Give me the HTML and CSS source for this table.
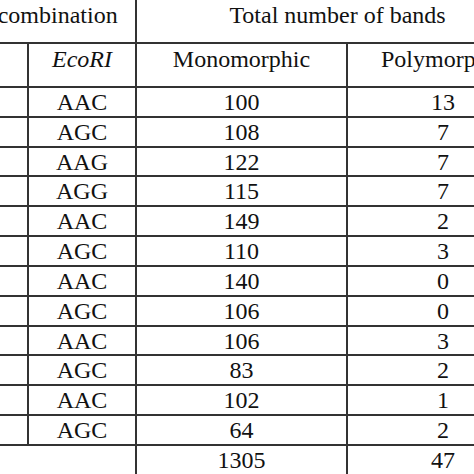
FILE: index.html
```html
<!DOCTYPE html>
<html>
<head>
<meta charset="utf-8">
<link rel="stylesheet" href="styles.css">
</head>
<body>
<table class="bands">
  <colgroup>
    <col class="c-mse">
    <col class="c-eco">
    <col class="c-mono">
    <col class="c-poly">
  </colgroup>
  <thead>
    <tr class="h1">
      <th colspan="2">Primer combination</th>
      <th colspan="2" class="last">Total number of bands</th>
    </tr>
    <tr class="h2">
      <th></th>
      <th><i>EcoRI</i></th>
      <th>Monomorphic</th>
      <th class="last">Polymorphic</th>
    </tr>
  </thead>
  <tbody>
    <tr><td></td><td>AAC</td><td>100</td><td class="last">13</td></tr>
    <tr><td></td><td>AGC</td><td>108</td><td class="last">7</td></tr>
    <tr><td></td><td>AAG</td><td>122</td><td class="last">7</td></tr>
    <tr><td></td><td>AGG</td><td>115</td><td class="last">7</td></tr>
    <tr><td></td><td>AAC</td><td>149</td><td class="last">2</td></tr>
    <tr><td></td><td>AGC</td><td>110</td><td class="last">3</td></tr>
    <tr><td></td><td>AAC</td><td>140</td><td class="last">0</td></tr>
    <tr><td></td><td>AGC</td><td>106</td><td class="last">0</td></tr>
    <tr><td></td><td>AAC</td><td>106</td><td class="last">3</td></tr>
    <tr><td></td><td>AGC</td><td>83</td><td class="last">2</td></tr>
    <tr><td></td><td>AAC</td><td>102</td><td class="last">1</td></tr>
    <tr><td></td><td>AGC</td><td>64</td><td class="last">2</td></tr>
    <tr class="total"><td colspan="2"></td><td>1305</td><td class="last">47</td></tr>
  </tbody>
</table>
</body>
</html>
```

FILE: styles.css
```css
html, body {
  margin: 0;
  padding: 0;
  width: 474px;
  height: 474px;
  overflow: hidden;
  background: #ffffff;
}

.bands {
  margin-left: -91px;
  border-collapse: separate;
  border-spacing: 0;
  table-layout: fixed;
  width: 631px;
  font-family: "Liberation Serif", "Times New Roman", serif;
  font-size: 24px;
  line-height: 24px;
  color: #111111;
}

.c-mse { width: 120px; }
.c-eco { width: 108px; }
.c-mono { width: 211px; }
.c-poly { width: 192px; }

.bands th,
.bands td {
  box-sizing: border-box;
  border-right: 2px solid #333333;
  border-bottom: 2px solid #333333;
  padding: 2px 0 0 0;
  text-align: center;
  vertical-align: top;
  font-weight: normal;
  white-space: nowrap;
  overflow: hidden;
}

.bands .h1 th,
.bands .h2 th {
  height: 44px;
  padding-top: 3px;
}

.bands tbody tr td {
  height: 29.83px;
}

.bands tbody tr.total td {
  height: 32px;
}

.bands i {
  font-style: italic;
}
```
